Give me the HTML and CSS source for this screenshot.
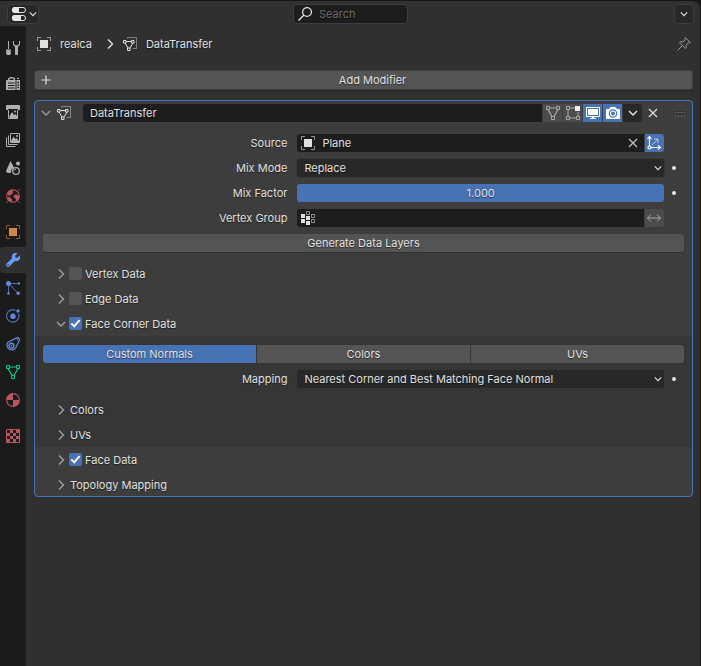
FILE: index.html
```html
<!DOCTYPE html>
<html lang="en">
<head>
<meta charset="utf-8">
<title>Properties</title>
<link rel="stylesheet" href="styles.css">
</head>
<body>
<svg class="defs" aria-hidden="true">
  <symbol id="object" viewBox="0 0 14 14"><path d="M.5 4V.5H4M10 .5h3.5V4M13.5 10v3.5H10M4 13.5H.5V10" fill="none" stroke="currentColor" opacity=".6"/><path d="M3 3h8v8H3z" fill="currentColor"/></symbol>
  <symbol id="transfer" viewBox="0 0 14 14"><path d="M4.500 1.500V.5h9v11H9.500" fill="none" stroke="currentColor" opacity=".45"/><path d="M3.500 4.500h5M2 6l3 5M10 6l-3 5" fill="none" stroke="currentColor"/><path d="M.5 3.500h2.500V6H.5zM8.500 3.500H11V6H8.500zM4.500 11H7v2.500H4.500z" fill="none" stroke="currentColor"/></symbol>
  <symbol id="mesh" viewBox="0 0 14 14"><path d="M3.500 2h7M2 3.500l4 7M12 3.500l-4 7" fill="none" stroke="currentColor" stroke-width="1.200"/><path d="M.5.5h3v3h-3zM10.500.5h3v3h-3zM5.500 10.500h3v3h-3z" fill="none" stroke="currentColor"/></symbol>
  <symbol id="down" viewBox="0 0 10 10"><path d="M1 3l4 4 4-4" fill="none" stroke="currentColor" stroke-width="1.400"/></symbol>
  <symbol id="right" viewBox="0 0 10 10"><path d="M3 .5L7.500 5 3 9.500" fill="none" stroke="currentColor" stroke-width="1.400"/></symbol>
  <symbol id="close" viewBox="0 0 10 10"><path d="M1 1l8 8M9 1L1 9" fill="none" stroke="currentColor" stroke-width="1.200"/></symbol>
</svg>

<div class="editor">
  <header class="topbar">
    <button class="editor-type" aria-label="Editor type">
      <svg class="i14" viewBox="0 0 14 14"><rect x=".5" y=".5" width="13" height="5" rx="2.500" fill="#222" stroke="#e5e5e5"/><path d="M3 0h4v6H3a3 3 0 010-6z" fill="#e5e5e5"/><rect x=".5" y="8.500" width="13" height="5" rx="2.500" fill="#222" stroke="#e5e5e5"/><path d="M3 8h6v6H3a3 3 0 010-6z" fill="#e5e5e5"/></svg>
      <svg class="i8"><use href="#down"/></svg>
    </button>
    <label class="search">
      <svg class="i14" viewBox="0 0 14 14"><circle cx="9" cy="5" r="4.400" fill="none" stroke="currentColor" stroke-width="1.300"/><path d="M6 8L.5 13.500" stroke="currentColor" stroke-width="1.400"/></svg>
      <input type="text" placeholder="Search" aria-label="Search">
    </label>
    <button class="options" aria-label="Options"><svg class="i8"><use href="#down"/></svg></button>
  </header>

  <div class="main">
    <nav class="tabs" aria-label="Property tabs">
      <div class="tab-group">
        <button class="tab" aria-label="Tool"><svg class="i14" viewBox="0 0 14 14"><path d="M2.500 0v8" stroke="currentColor"/><path d="M0 8.500h5v1l-.7.600.7 1V12l-1 2H1l-1-2v-.9l.7-1L0 9.500z" fill="currentColor"/><path d="M7 0v3.500L9 6v7a1.500 1.500 0 003 0V6l2-2.500V0h-1v3l-1.500 1.200h-2L8 3V0z" fill="currentColor"/></svg></button>
      </div>
      <div class="tab-group">
        <button class="tab" aria-label="Render"><svg class="i14" viewBox="0 0 14 14"><path d="M0 4a1 1 0 011-1h1V1h1.500V0h4v1H9v2h5v10H0z" fill="currentColor"/><path d="M3.500 1.500h4V3h-4z" fill="#1b1b1b"/><path d="M2 6h6.500M2 8.500h6.500M2 11h6.500M10 3.500V13" stroke="#1b1b1b"/><path d="M11.500 5.500H13M11.500 8h1.500M11.500 10.500H13" stroke="#1b1b1b" stroke-width="1.500"/><path d="M11 1h2v1h-2z" fill="currentColor"/></svg></button>
        <button class="tab" aria-label="Output"><svg class="i14" viewBox="0 0 14 14"><path d="M0 1a1 1 0 011-1h12a1 1 0 011 1v4H0z" fill="currentColor"/><path d="M2 4.500h10" stroke="#1b1b1b"/><path d="M2.500 5v8.500h9V5" fill="none" stroke="currentColor"/><path d="M3.500 13v-2L6 7l2 3 1.500-1 1.500 2v2z" fill="currentColor"/><circle cx="9" cy="6.500" r="1" fill="currentColor"/></svg></button>
        <button class="tab" aria-label="View Layer"><svg class="i14" viewBox="0 0 14 14"><path d="M4.500.5h9v9h-9zM2.500 2.500v9h9M.5 4.500v9h9" fill="none" stroke="currentColor"/><path d="M5 9V8l2.500-4.500L9.500 6l1-1L13 8v1z" fill="currentColor"/><circle cx="11" cy="3" r="1" fill="currentColor"/></svg></button>
        <button class="tab" aria-label="Scene"><svg class="i14" viewBox="0 0 14 14"><path d="M4.500 0L8 6.500a5 5 0 00-3 5.200C2 12.500 0 11.500 0 10z" fill="currentColor"/><circle cx="12" cy="2.500" r="2" fill="currentColor"/><circle cx="10" cy="10" r="3.300" fill="none" stroke="currentColor" stroke-width="1.300"/><path d="M8.300 9.500A2 2 0 0110 8.200" fill="none" stroke="currentColor"/></svg></button>
        <button class="tab red" aria-label="World"><svg class="i14" viewBox="0 0 14 14"><circle cx="7" cy="7" r="6.300" fill="none" stroke="currentColor" stroke-width="1.100"/><path d="M1 5l2-3.500L6 .7l1.500 1L6.500 3l.5 1.500L5 5.500 4 7 2 6zM8 6l3-.5 2.500 1.500-1 3-2 2-1-2.500L7.500 8z" fill="currentColor"/><path d="M2.500 8l2 1 1.500 2-1 2-2.500-1.500zM12 2L14 0M2 12l-2 2M12 12l2 2" fill="currentColor" stroke="currentColor" stroke-width=".8"/></svg></button>
      </div>
      <div class="tab-group">
        <button class="tab orange" aria-label="Object"><svg class="i14"><use href="#object"/></svg></button>
        <button class="tab active" aria-label="Modifiers"><svg class="i14" viewBox="0 0 14 14"><path d="M11.500.3A4 4 0 006 5.300L.7 10.500a1.900 1.900 0 002.800 2.800L8.700 8A4 4 0 0013.700 2.500L11.500 4.700 9.300 4.600V2.500z" fill="currentColor"/><circle cx="2.100" cy="11.900" r=".8" fill="#303030"/></svg></button>
        <button class="tab blue" aria-label="Particles"><svg class="i14" viewBox="0 0 14 14"><circle cx="2.500" cy="2.500" r="2.500" fill="currentColor"/><path d="M5 2.500h7M2.500 5v7M4 4l7.500 7.500" stroke="currentColor" opacity=".75"/><circle cx="12.800" cy="2.500" r="1.200" fill="currentColor"/><circle cx="2.500" cy="12.500" r="1.300" fill="currentColor"/><circle cx="12.200" cy="12.200" r="1.700" fill="currentColor"/></svg></button>
        <button class="tab blue" aria-label="Physics"><svg class="i14" viewBox="0 0 14 14"><path d="M9.500 1.400A6.200 6.200 0 1012.600 5" fill="none" stroke="currentColor" stroke-width="1.200" opacity=".75"/><circle cx="7" cy="7.200" r="2.700" fill="currentColor"/><circle cx="12" cy="2" r="1.700" fill="currentColor"/></svg></button>
        <button class="tab blue" aria-label="Constraints"><svg class="i14" viewBox="0 0 14 14"><path d="M2 5.200L10.500.9A2 2 0 0113.300 3.500L9.600 11A4.700 4.700 0 112 5.200z" fill="none" stroke="currentColor" stroke-width="1.200"/><circle cx="5.500" cy="8.700" r="2.400" fill="none" stroke="currentColor" stroke-width="1.400"/><circle cx="5.500" cy="8.700" r=".8" fill="currentColor"/><circle cx="11.500" cy="2.500" r=".8" fill="currentColor"/></svg></button>
        <button class="tab green" aria-label="Data"><svg class="i14"><use href="#mesh"/></svg></button>
        <button class="tab red" aria-label="Material"><svg class="i14" viewBox="0 0 14 14"><circle cx="7" cy="7" r="6.400" fill="none" stroke="currentColor" stroke-width="1.100"/><path d="M7 .5V7H.5A6.500 6.500 0 017 .5zM7 7h6.500A6.500 6.500 0 017 13.500z" fill="currentColor"/></svg></button>
      </div>
      <div class="tab-group">
        <button class="tab red" aria-label="Texture"><svg class="i14" viewBox="0 0 14 14"><path d="M.5.5h13v13H.5z" fill="none" stroke="currentColor"/><path d="M4 1h3v3H4zM10 1h3v3h-3zM1 4h3v3H1zM7 4h3v3H7zM4 7h3v3H4zM10 7h3v3h-3zM1 10h3v3H1zM7 10h3v3H7z" fill="currentColor"/></svg></button>
      </div>
    </nav>

    <main class="content">
      <div class="path">
        <svg class="i14"><use href="#object"/></svg>
        <span class="path-name">realca</span>
        <svg class="i10 path-sep"><use href="#right"/></svg>
        <svg class="i14"><use href="#transfer"/></svg>
        <span class="path-name">DataTransfer</span>
        <button class="plain pin" aria-label="Pin"><svg class="i14" viewBox="0 0 14 14"><path d="M8.500.7l4.800 4.800-1.300.6-.8-.2L9 8.200l.3 2.500-1 .8L2.500 5.700l.8-1 2.500.3L8.100 2.800 7.900 2zM5.200 8.800L.5 13.500" fill="none" stroke="currentColor"/></svg></button>
      </div>

      <button class="button add"><svg class="i10" viewBox="0 0 10 10"><path d="M5 .5v9M.5 5h9" stroke="currentColor" stroke-width="1.200"/></svg><span>Add Modifier</span></button>

      <section class="panel">
        <div class="panel-head">
          <button class="plain" aria-label="Collapse"><svg class="i10 dim"><use href="#down"/></svg></button>
          <svg class="i14"><use href="#transfer"/></svg>
          <div class="name-group">
            <input class="name" type="text" value="DataTransfer" aria-label="Modifier name">
            <button class="toggle" aria-label="On cage"><svg class="i14"><use href="#mesh"/></svg></button>
            <button class="toggle" aria-label="Edit mode"><svg class="i14" viewBox="0 0 14 14"><path d="M4 2h5M2 4v6M4 12h6M12 6v4" stroke="currentColor" fill="none"/><path d="M.5.5h3v3h-3zM.5 10.500h3v3h-3zM10.500 10.500h3v3h-3z" fill="none" stroke="currentColor"/><path d="M9 0h5v5H9z" fill="#eee"/></svg></button>
            <button class="toggle on" aria-label="Realtime"><svg class="i14" viewBox="0 0 14 14"><path d="M.5 1.500h13v9H.5z" fill="none" stroke="currentColor"/><path d="M2 3h10v6H2zM6 11h2v1h2v1H4v-1h2z" fill="currentColor"/></svg></button>
            <button class="toggle on" aria-label="Render"><svg class="i14" viewBox="0 0 14 14"><path d="M1 3h2l1.500-2h5L11 3h2a1 1 0 011 1v8a1 1 0 01-1 1H1a1 1 0 01-1-1V4a1 1 0 011-1z" fill="currentColor"/><circle cx="7" cy="7.500" r="3.700" fill="none" stroke="#4772b3" stroke-width="1.200"/><circle cx="7" cy="7.500" r="2" fill="#4772b3"/></svg></button>
            <button class="toggle menu" aria-label="Modifier menu"><svg class="i10"><use href="#down"/></svg></button>
          </div>
          <button class="plain remove" aria-label="Remove"><svg class="i10"><use href="#close"/></svg></button>
          <svg class="grip" viewBox="0 0 12 5"><path d="M0 .5h12M0 3.500h12" stroke="#151515" stroke-dasharray="1 2"/><path d="M0 1.500h12M0 4.500h12" stroke="#777" stroke-dasharray="1 2"/></svg>
        </div>

        <div class="fields">
          <div class="row">
            <label for="source">Source</label>
            <div class="joined">
              <div class="box"><svg class="i14"><use href="#object"/></svg><input id="source" type="text" value="Plane"><button class="plain clear" aria-label="Clear"><svg class="i10"><use href="#close"/></svg></button></div>
              <button class="toggle on" aria-label="Object transform"><svg class="i14" viewBox="0 0 14 14"><path d="M2.500 10V1M.5 3l2-2.500 2 2.500M4 11.500h9M11 9.500l2.500 2-2.500 2" fill="none" stroke="currentColor" stroke-width="1.200"/><circle cx="2.500" cy="11.500" r="1.500" fill="none" stroke="currentColor" stroke-width="1.200"/><path d="M5 9l6-6M7 3h4v4" fill="none" stroke="currentColor" opacity=".6"/></svg></button>
            </div>
          </div>
          <div class="row">
            <label for="mode">Mix Mode</label>
            <div class="select"><select id="mode"><option>Replace</option></select><svg class="i8"><use href="#down"/></svg></div>
            <i class="dot"></i>
          </div>
          <div class="row">
            <label for="factor">Mix Factor</label>
            <input id="factor" class="factor" type="text" value="1.000">
            <i class="dot"></i>
          </div>
          <div class="row">
            <label for="group">Vertex Group</label>
            <div class="joined">
              <div class="box"><svg class="i14" viewBox="0 0 14 14"><path d="M0 3h4v4H0zM0 8h4v4H0zM5 5h4v4H5zM5 10h4v4H5z" fill="currentColor"/><path d="M5.500.5h3v3h-3zM10.500 3.500h3v3h-3zM10.500 8.500h3v3h-3z" fill="none" stroke="currentColor" opacity=".55"/></svg><input id="group" type="text"></div>
              <button class="toggle" aria-label="Invert"><svg class="i14" viewBox="0 0 14 14"><path d="M.5 7h13M4 3.500L.5 7 4 10.500M10 3.500L13.500 7 10 10.500" fill="none" stroke="currentColor"/></svg></button>
            </div>
          </div>
          <button class="button">Generate Data Layers</button>
        </div>

        <div class="sub"><svg class="i10"><use href="#right"/></svg><label><input type="checkbox">Vertex Data</label></div>
        <div class="sub"><svg class="i10"><use href="#right"/></svg><label><input type="checkbox">Edge Data</label></div>
        <div class="sub open"><svg class="i10"><use href="#down"/></svg><label><input type="checkbox" checked>Face Corner Data</label></div>
        <div class="inner">
          <div class="inner-fields">
            <div class="segments">
              <button class="seg on">Custom Normals</button><button class="seg">Colors</button><button class="seg">UVs</button>
            </div>
            <div class="row">
              <label for="mapping">Mapping</label>
              <div class="select"><select id="mapping"><option>Nearest Corner and Best Matching Face Normal</option></select><svg class="i8"><use href="#down"/></svg></div>
              <i class="dot"></i>
            </div>
          </div>
          <div class="sub"><svg class="i10"><use href="#right"/></svg><span>Colors</span></div>
          <div class="sub"><svg class="i10"><use href="#right"/></svg><span>UVs</span></div>
        </div>
        <div class="sub"><svg class="i10"><use href="#right"/></svg><label><input type="checkbox" checked>Face Data</label></div>
        <div class="sub"><svg class="i10"><use href="#right"/></svg><span>Topology Mapping</span></div>
      </section>
    </main>
  </div>
</div>
</body>
</html>
```
FILE: styles.css
```css
* { box-sizing: border-box; }

body {
  margin: 0;
  background: #161616;
  color: #e0e0e0;
  font: 11px/18px Inter, "Liberation Sans", sans-serif;
  text-shadow: 0 1px 1px rgba(0, 0, 0, .5);
}

button, input, select {
  margin: 0;
  padding: 0;
  border: 0;
  border-radius: 0;
  background: none;
  color: inherit;
  font: inherit;
  text-shadow: inherit;
}

input { min-width: 0; }
svg { display: block; flex: none; }
.defs { display: none; }
.i14 { width: 14px; height: 14px; }
.i10 { width: 10px; height: 10px; }
.i8 { width: 8px; height: 8px; }
.plain { display: flex; }
.dim { color: #999; }

.editor {
  display: flex;
  flex-direction: column;
  min-height: 100vh;
  border: solid #161616;
  border-width: 1px 1px 0 0;
  border-radius: 0 8px 0 0;
  background: #303030;
  background-clip: padding-box;
}

/* Top bar */
.topbar {
  display: grid;
  grid-template-columns: 1fr auto 1fr;
  align-items: center;
  height: 25px;
  padding: 0 6px 0 7px;
}

.editor-type, .options, .search {
  display: flex;
  align-items: center;
  height: 20px;
  border: 1px solid #3d3d3d;
  border-radius: 4px;
  background: #282828;
}

.editor-type { gap: 3px; width: 32px; padding-left: 4px; }
.options { justify-content: center; width: 20px; justify-self: end; }
.search { width: 115px; gap: 7px; padding: 0 4px; background: #1d1d1d; }
.search input { width: 100%; }
.search input::placeholder { color: #6b6b6b; opacity: 1; }

.main { display: flex; flex: 1; }

/* Tab column */
.tabs { width: 26px; padding-top: 8px; background: #1b1b1b; color: #b0b0b0; }
.tab-group { margin-bottom: 8px; }
.tab { display: flex; align-items: center; justify-content: center; width: 26px; height: 28px; }
.tab.active { border: solid #1b1b1b; border-width: 1px 0; border-radius: 4px 0 0 4px; background: #303030; color: #6b9cf5; }
.red { color: #b8565f; }
.orange { color: #cf8748; }
.blue { color: #6389dc; }
.green { color: #00cf8f; }

/* Content */
.content { flex: 1; min-width: 0; padding: 8px 7px 8px 8px; }
.path { display: flex; align-items: center; height: 20px; margin-bottom: 16px; padding: 0 2px 0 3px; }
.path-name { margin-left: 9px; }
.path-sep { margin: 0 8px 0 13px; }
.pin { margin-left: auto; color: #999; }

.button {
  display: block;
  width: 100%;
  height: 18px;
  border-radius: 3px;
  background: #545454;
  box-shadow: 0 1px 0 rgba(0, 0, 0, .2);
  text-align: center;
}

.add { display: flex; align-items: center; height: 20px; margin-bottom: 10px; padding: 0 6px; border: 1px solid #3d3d3d; }
.add span { flex: 1; padding-left: 8px; }

/* Modifier panel */
.panel {
  overflow: hidden;
  outline: 1px solid #4772b3;
  outline-offset: -1px;
  border-radius: 4px;
  background: #3d3d3d;
}

.panel-head { display: flex; align-items: center; height: 26px; padding: 0 6px 0 7px; }
.panel-head > .i14 { margin-left: 6px; }
.name-group { display: flex; flex: 1; gap: 1px; min-width: 0; height: 18px; margin-left: 12px; border-radius: 3px; overflow: hidden; }
.name { flex: 1; padding: 0 7px; background: #1d1d1d; }
.toggle { display: flex; align-items: center; justify-content: center; width: 19px; background: #4c4c4c; color: #a8a8a8; }
.toggle.on { background: #4772b3; color: #fff; }
.toggle.menu { background: #282828; color: #e5e5e5; }
.remove { margin: 0 17px 0 6px; }
.grip { width: 12px; height: 5px; }

.fields { display: grid; gap: 7px; padding: 8px 9px 9px; }
.row { display: grid; grid-template-columns: minmax(0, 2fr) 10px minmax(0, 3fr) 20px; height: 18px; }
.row > label { text-align: right; }
.row > :nth-child(2) { grid-column: 3; }

.joined { display: flex; gap: 1px; border-radius: 3px; overflow: hidden; }
.box { display: flex; flex: 1; align-items: center; gap: 7px; min-width: 0; padding: 0 6px 0 4px; background: #1d1d1d; }
.box input { flex: 1; }
.clear { color: #c4c4c4; }

.select { display: grid; align-items: center; border-radius: 3px; background: #282828; box-shadow: 0 0 0 1px #363636; }
.select > * { grid-area: 1 / 1; }
.select > svg { justify-self: end; margin-right: 2px; pointer-events: none; }
select { width: 100%; height: 18px; padding: 0 7px; appearance: none; }
.factor { width: 100%; border-radius: 3px; background: #4772b3; text-align: center; }
.dot { place-self: center; width: 4px; height: 4px; border-radius: 2px; background: #e5e5e5; }

/* Sub-panels */
.sub { display: flex; align-items: center; gap: 4px; height: 25px; padding-left: 22px; }
.sub svg { color: #a0a0a0; }
.sub label { display: flex; align-items: center; gap: 3px; margin-left: -1px; }

input[type="checkbox"] { width: 13px; height: 13px; border-radius: 2px; background: #545454; appearance: none; }
input[type="checkbox"]:checked { display: grid; place-items: center; background: #4772b3; }
input[type="checkbox"]:checked::before {
  content: "";
  box-sizing: border-box;
  width: 9px;
  height: 5px;
  margin-bottom: 2px;
  border: solid #fff;
  border-width: 0 0 2px 2px;
  transform: rotate(-48deg);
}

.inner { background: #363636; }
.inner-fields { display: grid; gap: 7px; padding: 9px; }
.segments { display: grid; grid-template-columns: repeat(3, 1fr); gap: 1px; height: 18px; border-radius: 3px; overflow: hidden; }
.seg { background: #545454; }
.seg.on { background: #4772b3; }
```
